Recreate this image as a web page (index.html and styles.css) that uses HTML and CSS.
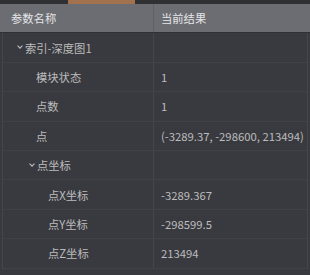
FILE: index.html
```html
<!DOCTYPE html>
<html>
<head>
<meta charset="utf-8">
<link rel="stylesheet" href="styles.css">
</head>
<body>
<div class="panel">
  <div class="topbar"><div class="tab"></div></div>
  <div class="table">
    <div class="row head">
      <div class="cell name">参数名称</div>
      <div class="cell val">当前结果</div>
    </div>
    <div class="row">
      <div class="cell name l1"><span class="chev"></span>索引-深度图1</div>
      <div class="cell val"></div>
    </div>
    <div class="row">
      <div class="cell name l2">模块状态</div>
      <div class="cell val">1</div>
    </div>
    <div class="row">
      <div class="cell name l2">点数</div>
      <div class="cell val">1</div>
    </div>
    <div class="row">
      <div class="cell name l2">点</div>
      <div class="cell val">(-3289.37, -298600, 213494)</div>
    </div>
    <div class="row">
      <div class="cell name l2c"><span class="chev"></span>点坐标</div>
      <div class="cell val"></div>
    </div>
    <div class="row">
      <div class="cell name l3">点X坐标</div>
      <div class="cell val">-3289.367</div>
    </div>
    <div class="row">
      <div class="cell name l3">点Y坐标</div>
      <div class="cell val">-298599.5</div>
    </div>
    <div class="row">
      <div class="cell name l3">点Z坐标</div>
      <div class="cell val">213494</div>
    </div>
  </div>
</div>
</body>
</html>
```
FILE: styles.css
```css
html, body {
  margin: 0;
  padding: 0;
  background: #393a3f;
}
.panel {
  width: 310px;
  height: 275px;
  background: #393a3f;
  font-family: "Noto Sans CJK SC", "Noto Sans", sans-serif;
  font-size: 11.3px;
  color: #bcbcbe;
  overflow: hidden;
}
.topbar {
  height: 4px;
  background: #2f3034;
  display: flex;
  padding-left: 68px;
}
.tab {
  width: 67px;
  height: 4px;
  background: #a2714d;
}
.table {
  border-left: 1px solid #44464b;
  border-right: 1px solid #44464b;
  margin: 0 2px 0 2px;
}
.row {
  display: grid;
  grid-template-columns: 151px 1fr;
  height: 29.4px;
  border-bottom: 1px solid #414248;
  box-sizing: border-box;
}
.row.head {
  background: #6b6d73;
  color: #e6e6e8;
  border-bottom: 1px solid #303135;
  margin: 0 -3px 0 -3px;
  padding: 0 3px;
}
.cell {
  display: flex;
  align-items: center;
  white-space: nowrap;
}
.cell.name {
  border-right: 1px solid #44464b;
}
.head .cell.name {
  padding-left: 8px;
  border-right: 1px solid #5f6167;
}
.head .cell.val {
  padding-left: 7px;
}
.cell.val {
  padding-left: 7px;
}
.l1 { padding-left: 14px; }
.l2 { padding-left: 33px; }
.l2c { padding-left: 26px; }
.l3 { padding-left: 45px; }
.chev {
  display: inline-block;
  width: 3px;
  height: 3px;
  border-right: 1.6px solid #c4c4c6;
  border-bottom: 1.6px solid #c4c4c6;
  transform: rotate(45deg);
  margin: -3px 3px 0 1px;
}
```
